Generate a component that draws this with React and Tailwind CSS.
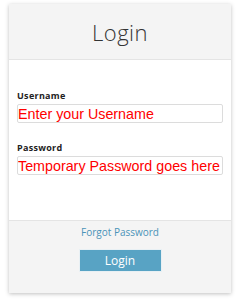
import React, { useState } from "react";

export default function App() {
  const [form, setForm] = useState({
    username: "Enter your Username",
    password: "Temporary Password goes here",
  });

  const handleChange = (e) => {
    setForm({ ...form, [e.target.name]: e.target.value });
  };

  return (
    <div className="w-[243px] h-[300px] bg-white pt-[4px] pl-[9px] font-['Open_Sans',sans-serif]">
      <div className="w-[222px] h-[289px] flex flex-col shadow-[0_1px_4px_rgba(0,0,0,0.25)] bg-white">
        {/* Header */}
        <div className="h-[56px] bg-[#f4f4f4] border-b border-[#e4e4e4] flex items-center justify-center">
          <h1 className="text-[22px] font-light text-[#333] leading-none tracking-[0.5px]">Login</h1>
        </div>

        {/* Body */}
        <div className="h-[160px] pl-[8px] pt-[31px] bg-white">
          <label className="block text-[9px] font-bold text-[#222] leading-none tracking-[0.3px] mb-[4px]">Username</label>
          <input
            name="username"
            value={form.username}
            onChange={handleChange}
            className="block w-[206px] h-[19px] border border-[#dcdcdc] rounded-[2px] px-0 text-[14.3px] text-[#ff0000] leading-none outline-none font-['Liberation_Sans',Arial,sans-serif]"
          />
          <label className="block text-[9px] font-bold text-[#222] leading-none tracking-[0.3px] mt-[20px] mb-[4px]">Password</label>
          <input
            name="password"
            value={form.password}
            onChange={handleChange}
            className="block w-[206px] h-[19px] border border-[#dcdcdc] rounded-[2px] px-0 text-[14.3px] text-[#ff0000] leading-none outline-none font-['Liberation_Sans',Arial,sans-serif]"
          />
        </div>

        {/* Footer */}
        <div className="flex-1 bg-[#f4f4f4] border-t border-[#e4e4e4] flex flex-col items-center pt-[4px]">
          <a href="#" className="text-[10px] text-[#4a93b8] leading-[14px]">Forgot Password</a>
          <button className="mt-[10px] w-[83px] h-[23px] bg-[#58a3c4] border border-[#e8f0f4] text-white text-[12px] leading-none">
            Login
          </button>
        </div>
      </div>
    </div>
  );
}
